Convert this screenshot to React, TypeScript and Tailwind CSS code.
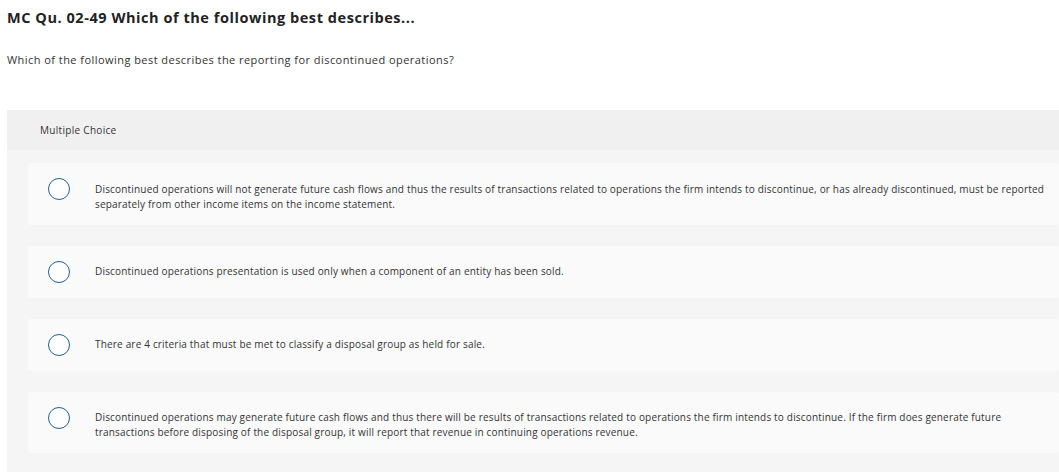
import React from "react";

const options = [
  "Discontinued operations will not generate future cash flows and thus the results of transactions related to operations the firm intends to discontinue, or has already discontinued, must be reported separately from other income items on the income statement.",
  "Discontinued operations presentation is used only when a component of an entity has been sold.",
  "There are 4 criteria that must be met to classify a disposal group as held for sale.",
  "Discontinued operations may generate future cash flows and thus there will be results of transactions related to operations the firm intends to discontinue. If the firm does generate future transactions before disposing of the disposal group, it will report that revenue in continuing operations revenue.",
];

export default function App() {
  return (
    <div
      className="w-[1059px] h-[472px] overflow-hidden bg-white text-[#333]"
      style={{ fontFamily: "'Open Sans', Arial, sans-serif" }}
    >
      <div className="pl-[7px] pt-[9px]">
        <h1 className="text-[14.5px] leading-[18px] font-bold tracking-[0.55px] text-[#222]">
          MC Qu. 02-49 Which of the following best describes...
        </h1>
        <p className="mt-[25px] text-[11px] leading-[16px] tracking-[0.45px] text-[#333]">
          Which of the following best describes the reporting for discontinued operations?
        </p>
        <div className="mt-[42px] bg-[#f5f5f5]">
          <div className="h-[40px] bg-[#f0f0f0] pl-[33px] flex items-center text-[10px] tracking-[0.3px] text-[#333]">
            Multiple Choice
          </div>
          <div className="pt-[13px] pl-[21px] flex flex-col gap-[21px] pb-[20px]">
            {options.map((t, i) => (
              <div key={i} className="bg-[#fafafa] flex items-start pl-[20px] py-[15px] rounded-[2px]">
                <div className="w-[22px] h-[22px] shrink-0 rounded-full border-[1.5px] border-[#1f5f9b] bg-white" />
                <div className="ml-[25px] mt-[3.5px] mb-[-2px] w-[955px] text-[10px] leading-[15px] tracking-[0.18px] text-[#333]">
                  {t}
                </div>
              </div>
            ))}
          </div>
        </div>
      </div>
    </div>
  );
}
